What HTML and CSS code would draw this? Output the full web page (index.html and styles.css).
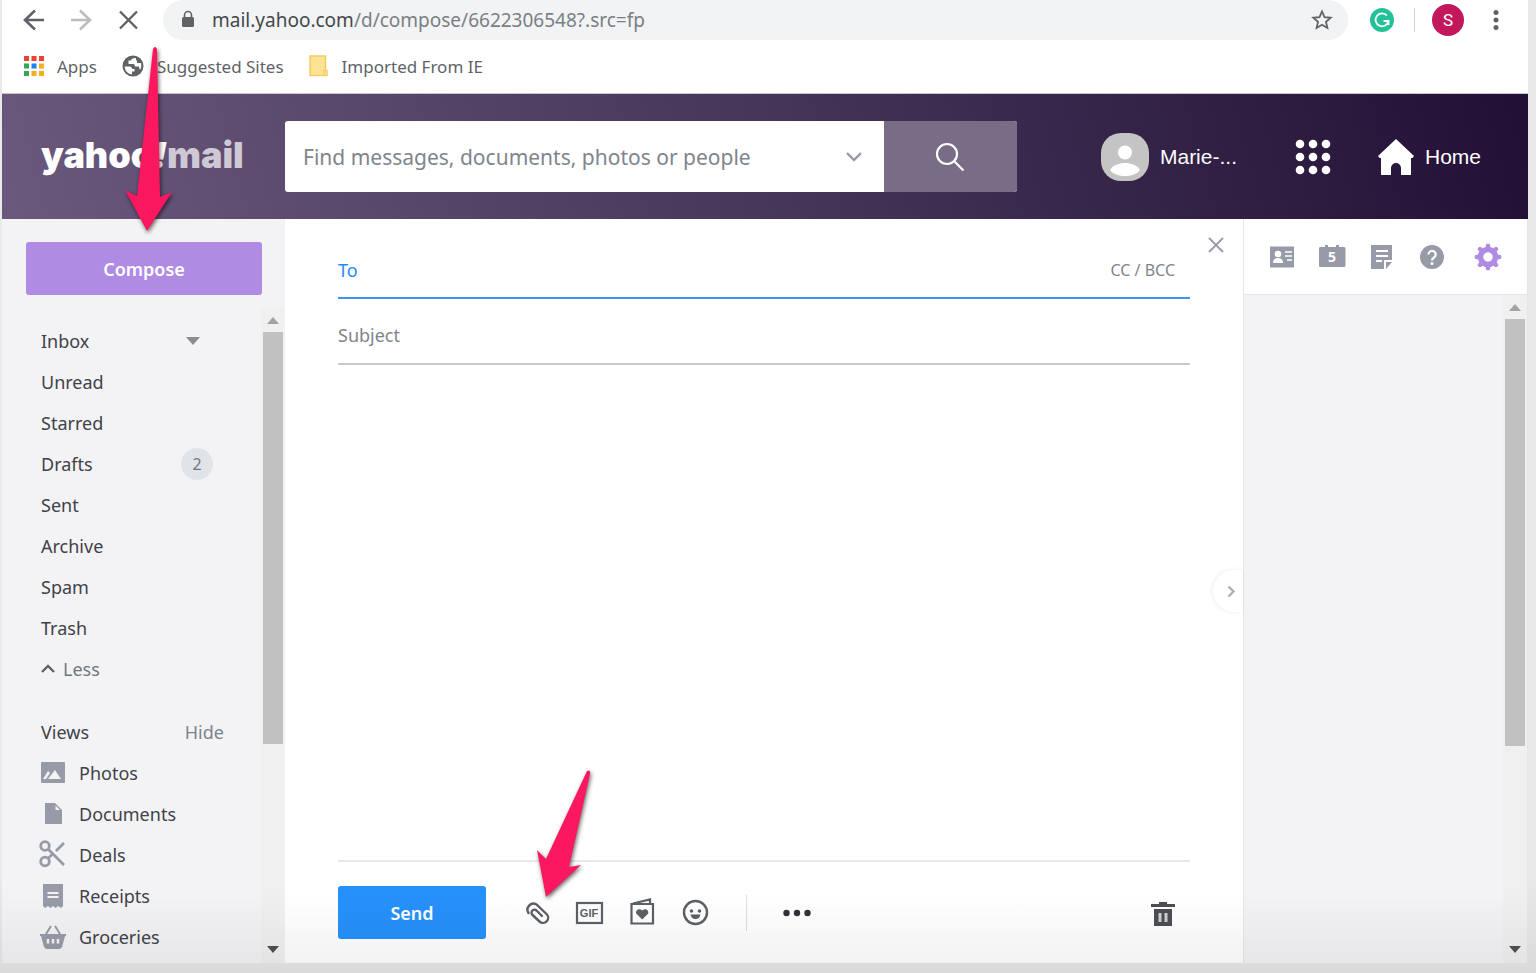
FILE: index.html
```html
<!DOCTYPE html>
<html lang="en">
  <head>
    <meta charset="UTF-8">
    <title>Yahoo Mail - Compose</title>
    <link rel="stylesheet" href="styles.css">
  </head>
  <body>
    <div class="window">
      <!-- browser toolbar -->
      <div class="toolbar">
        <button class="nav-btn" aria-label="Back">
          <svg width="24" height="24" viewBox="0 0 24 24" fill="none" stroke="#5f6368" stroke-width="2.600"><path d="M22 12H3M13 2.500L3 12l10 9.500"/></svg>
        </button>
        <button class="nav-btn" aria-label="Forward">
          <svg width="24" height="24" viewBox="0 0 24 24" fill="none" stroke="#bdbdbd" stroke-width="2.600"><path d="M2 12h19M11 2.500L21 12l-10 9.500"/></svg>
        </button>
        <button class="nav-btn" aria-label="Stop">
          <svg width="24" height="24" viewBox="0 0 24 24" fill="none" stroke="#5f6368" stroke-width="2.400"><path d="M4 3.500l17 17M21 3.500l-17 17"/></svg>
        </button>
        <div class="address">
          <svg width="14" height="18" viewBox="0 0 14 18"><rect x="1" y="6" width="12" height="10" rx="1.500" fill="#5f6368"/><path d="M3.500 7V4a3.500 3.500 0 0 1 7 0v3" fill="none" stroke="#5f6368" stroke-width="1.600"/></svg>
          <span class="url"><b>mail.yahoo.com</b>/d/compose/6622306548?.src=fp</span>
          <button class="star" aria-label="Bookmark this page">
            <svg width="22" height="22" viewBox="0 0 22 22" fill="none" stroke="#5f6368" stroke-width="1.800"><path d="M11 2.500l2.500 5.700 6.200.6-4.700 4.100 1.400 6.100-5.400-3.200-5.400 3.200L7 12.900 2.300 8.800l6.200-.6z"/></svg>
          </button>
        </div>
        <button class="grammarly" aria-label="Grammarly">
          <svg width="24" height="24" viewBox="0 0 24 24"><circle cx="12" cy="12" r="12" fill="#23c197"/><path d="M17 7.500A6.500 6.500 0 1 0 18.500 13H13.500M18.500 13v4" fill="none" stroke="#fff" stroke-width="1.800"/></svg>
        </button>
        <button class="profile">S</button>
        <button class="more" aria-label="Menu">
          <svg width="6" height="22" viewBox="0 0 6 22" fill="#5f6368"><circle cx="3" cy="3.500" r="2.500"/><circle cx="3" cy="11" r="2.500"/><circle cx="3" cy="18.500" r="2.500"/></svg>
        </button>
      </div>
      <div class="bookmarks">
        <a href="#">
          <svg width="20" height="20" viewBox="0 0 20 20"><path d="M0 0h5v5H0zM7.500 0h5v5h-5zM15 0h5v5h-5z" fill="#ea4335"/><path d="M0 7.500h5v5H0zM0 15h5v5H0z" fill="#34a853"/><path d="M7.500 7.500h5v5h-5z" fill="#1a84f0"/><path d="M15 7.500h5v5h-5zM7.500 15h5v5h-5zM15 15h5v5h-5z" fill="#fbab1d"/></svg>
          Apps
        </a>
        <a href="#">
          <svg width="22" height="22" viewBox="0 0 22 22"><circle cx="11" cy="11" r="10.500" fill="#5f6368"/><path d="M2.500 11.500h5q2.500 0 2.500 2.500h2.500v2.500h-2.500v3q-6.500-1-7.500-8zM14 3q-5 0-5 2.500H6.500V9h5q1.500 0 1.500 2.500h4q0 2.500 1.500 3 1.500-3 .500-6.500h-4V5.500H14z" fill="#fff"/></svg>
          Suggested Sites
        </a>
        <a href="#">
          <svg width="20" height="22" viewBox="0 0 20 22"><path d="M1 1h15.500v14.500h1.500v5H1z" fill="#ffe394" stroke="#f3cd63" stroke-width="1.500"/><path d="M15 20v-5" stroke="#f3cd63" stroke-width="1.500"/></svg>
          Imported From IE
        </a>
      </div>

      <!-- mail header -->
      <header class="header">
        <a href="#" class="logo">yahoo<i>!</i><span>mail</span></a>
        <form class="search">
          <input type="text" aria-label="Search" placeholder="Find messages, documents, photos or people">
          <button type="button" class="search-options" aria-label="Search options">
            <svg width="16" height="10" viewBox="0 0 16 10" fill="none" stroke="#979ba7" stroke-width="2.400"><path d="M1 1l7 7 7-7"/></svg>
          </button>
          <button type="button" class="search-btn" aria-label="Search">
            <svg width="30" height="30" viewBox="0 0 30 30" fill="none" stroke="#fff" stroke-width="2.200"><circle cx="12" cy="12" r="10"/><path d="M19 19l9.500 9.500"/></svg>
          </button>
        </form>
        <a href="#" class="account">
          <svg width="48" height="48" viewBox="0 0 48 48"><rect width="48" height="48" rx="20" fill="#c4c4c4"/><circle cx="24" cy="19.500" r="7" fill="#fff"/><path d="M9 37c3-5 9-7 15-7s12 2 15 7c-3 4-9 6-15 6s-12-2-15-6z" fill="#fff"/></svg>
          Marie-...
        </a>
        <button class="apps" aria-label="Apps">
          <svg width="36" height="36" viewBox="0 0 36 36" fill="#fff"><circle cx="5" cy="5" r="4.300"/><circle cx="18" cy="5" r="4.300"/><circle cx="31" cy="5" r="4.300"/><circle cx="5" cy="18" r="4.300"/><circle cx="18" cy="18" r="4.300"/><circle cx="31" cy="18" r="4.300"/><circle cx="5" cy="31" r="4.300"/><circle cx="18" cy="31" r="4.300"/><circle cx="31" cy="31" r="4.300"/></svg>
        </button>
        <a href="#" class="home">
          <svg width="36" height="36" viewBox="0 0 36 36" fill="#fff"><path d="M18 0l18 17-1.500 2H33v17H23v-7a5 5 0 0 0-10 0v7H3V19H1.500L0 17z"/></svg>
          Home
        </a>
      </header>

      <div class="content">
        <aside class="sidebar">
          <button class="compose">
            Compose
            <svg class="arrow arrow-compose" width="54" height="194" viewBox="0 0 54 194"><path d="M31 10q2-4 4 0l3 148 12-5-25 39L3 151l12 6z" fill="#fb185f"/></svg>
          </button>
          <div class="folders-wrap">
            <nav class="folders">
              <ul>
                <li><a href="#">Inbox</a>
                  <svg class="caret" width="14" height="8" viewBox="0 0 14 8"><path d="M0 0h14L7 8z" fill="#8a8c92"/></svg></li>
                <li><a href="#">Unread</a></li>
                <li><a href="#">Starred</a></li>
                <li><a href="#">Drafts</a><span class="count">2</span></li>
                <li><a href="#">Sent</a></li>
                <li><a href="#">Archive</a></li>
                <li><a href="#">Spam</a></li>
                <li><a href="#">Trash</a></li>
                <li><button class="less"><svg width="14" height="9" viewBox="0 0 14 9" fill="none" stroke="#5b636a" stroke-width="2.400"><path d="M1 8l6-6 6 6"/></svg>Less</button></li>
              </ul>
              <div class="views-head"><span>Views</span><button>Hide</button></div>
              <ul class="views">
                <li><a href="#"><svg width="26" height="26" viewBox="0 0 26 26"><path d="M2 2h22a1 1 0 0 1 1 1v19a1 1 0 0 1-1 1H2a1 1 0 0 1-1-1V3a1 1 0 0 1 1-1z" fill="#979ba7"/><path d="M3 19l5-8 2 2-4 6zM8 19l7-9 6 9z" fill="#f3f3f5"/></svg>Photos</a></li>
                <li><a href="#"><svg width="26" height="26" viewBox="0 0 26 26"><path d="M5 2h10l7 7v14H5z" fill="#979ba7"/><path d="M15.500 4.500V9H20z" fill="#f3f3f5"/></svg>Documents</a></li>
                <li><a href="#"><svg width="26" height="26" viewBox="0 0 26 26" fill="none" stroke="#979ba7" stroke-width="2.800"><circle cx="5" cy="4" r="4.300"/><circle cx="5" cy="19.500" r="4.300"/><path d="M8 7l16 16M8 16.500l5-5M16 9l8-8"/></svg>Deals</a></li>
                <li><a href="#"><svg width="26" height="26" viewBox="0 0 26 26"><path d="M3 1h20v22l-2 2-3-2-2.500 2-2.500-2-2.500 2L8 23l-3 2-2-2z" fill="#979ba7"/><path d="M7.500 10h11M7.500 14h11" stroke="#f3f3f5" stroke-width="2"/></svg>Receipts</a></li>
                <li><a href="#"><svg width="26" height="26" viewBox="0 0 26 26"><path d="M0 10h26v2h-1l-3 11q-1 2-3 2H7q-2 0-3-2L1 12H0z" fill="#979ba7"/><path d="M6 10l5-8M20 10l-5-8" stroke="#979ba7" stroke-width="2"/><path d="M8 15v4.500M13 15v4.500M18 15v4.500" stroke="#f3f3f5" stroke-width="2.500"/></svg>Groceries</a></li>
              </ul>
            </nav>
            <div class="scrollbar">
              <svg width="12" height="7" viewBox="0 0 12 7"><path d="M0 7h12L6 0z" fill="#a3a3a3"/></svg>
              <div class="track"><div class="thumb"></div></div>
              <svg width="12" height="7" viewBox="0 0 12 7"><path d="M0 0h12L6 7z" fill="#505050"/></svg>
            </div>
          </div>
        </aside>

        <main class="composer">
          <button class="close" aria-label="Close">
            <svg width="16" height="16" viewBox="0 0 16 16" fill="none" stroke="#979ba7" stroke-width="1.800"><path d="M1 1l14 14M15 1L1 15"/></svg>
          </button>
          <div class="field field-to">
            <label for="to">To</label>
            <input type="text" id="to">
            <button class="cc">CC / BCC</button>
          </div>
          <div class="field">
            <input type="text" id="subject" aria-label="Subject" placeholder="Subject">
          </div>
          <textarea aria-label="Message body"></textarea>
          <div class="actions">
            <button class="send">Send</button>
            <button class="tool" aria-label="Attach files">
              <svg width="28" height="28" viewBox="0 0 28 28" fill="none" stroke="#5b5f66" stroke-width="2.400" stroke-linecap="round"><path d="M5.500 14A6 6 0 0 1 13.500 5.500l10 9.500a5 5 0 0 1-7 7.500l-7-6.500a3 3 0 0 1 4-4.500l5.500 5.500"/></svg>
              <svg class="arrow arrow-attach" width="54" height="136" viewBox="0 0 54 136"><path d="M52 4q4-2 3 3L34 100l12-2-35 32L2 83l9 9z" fill="#fb185f"/></svg>
            </button>
            <button class="tool" aria-label="Insert GIF">
              <svg width="28" height="28" viewBox="0 0 28 28"><rect x="1" y="4" width="25" height="20" fill="none" stroke="#5b5f66" stroke-width="2.200"/><text x="13" y="18" text-anchor="middle" class="gif">GIF</text></svg>
            </button>
            <button class="tool" aria-label="Stationery">
              <svg width="28" height="28" viewBox="0 0 28 28"><path d="M2.500 5h21.500v19.500H2.500zM4 4.500L21 .5v4" fill="none" stroke="#5b5f66" stroke-width="2.200"/><path d="M13.200 20.500l-6-6c-1-3 3-6 6-3 3-3 7 0 6 3z" fill="#5b5f66"/></svg>
            </button>
            <button class="tool" aria-label="Insert emoticon">
              <svg width="28" height="28" viewBox="0 0 28 28"><circle cx="13.500" cy="13.500" r="11.500" fill="none" stroke="#5b5f66" stroke-width="2.400"/><circle cx="9.500" cy="12" r="1.800" fill="#5b5f66"/><circle cx="17.500" cy="12" r="1.800" fill="#5b5f66"/><path d="M8.500 15.500h10q-1 4.500-5 4.500t-5-4.500z" fill="#5b5f66"/></svg>
            </button>
            <span class="divider"></span>
            <button class="tool" aria-label="More options">
              <svg width="28" height="8" viewBox="0 0 28 8" fill="#303236"><circle cx="3.500" cy="4" r="3.200"/><circle cx="14" cy="4" r="3.200"/><circle cx="24.500" cy="4" r="3.200"/></svg>
            </button>
            <button class="tool trash" aria-label="Delete draft">
              <svg width="24" height="26" viewBox="0 0 24 26"><path d="M0 4h8V2h8v2h8v3H0zM3 9h18v17H3z" fill="#4c4e53"/><path d="M9 13v9M15 13v9" stroke="#d0d0d2" stroke-width="3"/></svg>
            </button>
          </div>
          <button class="expand" aria-label="Show panel">
            <svg width="9" height="13" viewBox="0 0 9 13" fill="none" stroke="#b0b0b0" stroke-width="2.400"><path d="M1.500 1.500l5 5-5 5"/></svg>
          </button>
        </main>

        <aside class="right-rail">
          <div class="rail-icons">
            <button aria-label="Contacts">
              <svg width="26" height="26" viewBox="0 0 26 26"><path d="M1 2.500h24v21H1z" fill="#979ba7"/><circle cx="9" cy="10" r="3.300" fill="#fff"/><path d="M4 19q0-5 5-5t5 5z" fill="#fff"/><path d="M16 8h7M16 12h7M18 16h5" stroke="#fff" stroke-width="1.700"/></svg>
            </button>
            <button aria-label="Calendar">
              <svg width="26" height="26" viewBox="0 0 26 26"><path d="M1 3h5V1h3v2h8V1h3v2h5q1.500 0 1.500 1.500v17q0 1.500-1.500 1.500H1q-1 0-1-1.500v-17Q0 3 1 3z" fill="#979ba7"/><text x="13" y="18" text-anchor="middle" class="day">5</text></svg>
            </button>
            <button aria-label="Notepad">
              <svg width="26" height="26" viewBox="0 0 26 26"><path d="M2 1h21v15h-8v9H2z" fill="#979ba7"/><path d="M17 18h6l-6 7z" fill="#979ba7"/><path d="M7 7h12M7 12h12M7 17h6" stroke="#fff" stroke-width="2"/></svg>
            </button>
            <button aria-label="Help">
              <svg width="26" height="26" viewBox="0 0 26 26"><circle cx="13" cy="13" r="12" fill="#979ba7"/><path d="M9.500 10.500a3.600 3.600 0 1 1 5.500 3q-2 1.300-2 3" fill="none" stroke="#fff" stroke-width="2.200"/><circle cx="13" cy="19.500" r="1.500" fill="#fff"/></svg>
            </button>
            <button class="settings" aria-label="Settings">
              <svg width="28" height="28" viewBox="0 0 28 28"><circle cx="14" cy="14" r="7.500" fill="none" stroke="#b08be3" stroke-width="5.500"/><path d="M14 2.800V6M14 22v3.200M2.800 14H6M22 14h3.200M6.100 6.100l2 2M19.900 19.900l2 2M6.100 21.900l2-2M19.900 8.100l2-2" stroke="#b08be3" stroke-width="4.500" stroke-linecap="round"/></svg>
            </button>
          </div>
          <div class="rail-body">
            <div class="scrollbar">
              <svg width="12" height="7" viewBox="0 0 12 7"><path d="M0 7h12L6 0z" fill="#a3a3a3"/></svg>
              <div class="track"><div class="thumb"></div></div>
              <svg width="12" height="7" viewBox="0 0 12 7"><path d="M0 0h12L6 7z" fill="#505050"/></svg>
            </div>
          </div>
        </aside>
      </div>
    </div>
  </body>
</html>
```

FILE: styles.css
```css
* {
  box-sizing: border-box;
}
body {
  margin: 0;
  font-family: "Noto Sans", "Open Sans", sans-serif;
  font-size: 18px;
  color: #3f4248;
  background: linear-gradient(to bottom, #e9e9e9 90%, #dadada);
  min-height: 100vh;
  display: flex;
  padding: 0 8px 10px 2px;
}
button,
input,
textarea {
  font: inherit;
  color: inherit;
  background: none;
  border: 0;
  padding: 0;
  outline: none;
}
button {
  display: flex;
  align-items: center;
  justify-content: center;
}
a {
  color: inherit;
  text-decoration: none;
}
ul {
  list-style: none;
  margin: 0;
  padding: 0;
}
svg {
  display: block;
  flex: none;
  overflow: visible;
}
.window {
  flex: 1;
  position: relative;
  display: flex;
  flex-direction: column;
  background: #fff;
}
/* soft shade along the bottom edge of the window */
.window::after {
  content: "";
  position: absolute;
  left: 0;
  right: 0;
  bottom: 0;
  height: 72px;
  background: linear-gradient(to bottom, transparent, rgba(0, 0, 0, 0.05));
  pointer-events: none;
}

/* browser */
.toolbar {
  display: flex;
  align-items: center;
  height: 40px;
  padding: 0 29px 0 20px;
}
.nav-btn {
  margin-right: 23px;
}
.address {
  flex: 1;
  display: flex;
  align-items: center;
  height: 40px;
  margin-right: 22px;
  padding: 0 15px 0 18px;
  border-radius: 20px;
  background: #f1f3f4;
}
.url {
  flex: 1;
  margin-left: 17px;
  font-size: 19px;
  color: #7b7f84;
}
.url b {
  font-weight: normal;
  color: #45484c;
}
.profile {
  position: relative;
  width: 32px;
  height: 32px;
  margin: 0 29px 0 38px;
  border-radius: 50%;
  background: #c2185b;
  color: #fff;
  font-family: Roboto, sans-serif;
  font-size: 17px;
}
.profile::before {
  content: "";
  position: absolute;
  left: -18px;
  top: 4px;
  width: 1px;
  height: 24px;
  background: #d0d0d0;
}
.bookmarks {
  display: flex;
  height: 54px;
  padding: 0 0 1px 22px;
  border-bottom: 1px solid #c9c6ce;
  font-size: 17px;
  color: #5f6368;
}
.bookmarks a {
  display: flex;
  align-items: center;
  gap: 13px;
  margin-right: 25px;
}

/* mail header */
.header {
  display: flex;
  align-items: center;
  height: 125px;
  padding: 0 47px 0 39px;
  background: linear-gradient(75deg, #6a597d, #46365a 50%, #220f35);
  color: #fff;
  font-family: "Liberation Sans", Arial, sans-serif;
  font-size: 21px;
}
.logo {
  width: 244px;
  padding-bottom: 3px;
  font-family: Inter, sans-serif;
  font-weight: 900;
  font-size: 36px;
}
.logo span {
  color: #cfc9d6;
}
.search {
  flex: 1;
  display: flex;
  height: 71px;
  border-radius: 3px;
  overflow: hidden;
  background: #fff;
}
.search input {
  flex: 1;
  min-width: 0;
  padding-left: 18px;
  font-family: "Noto Sans", "Open Sans", sans-serif;
  font-size: 21px;
  color: #3f4248;
}
.search input::placeholder,
.field input::placeholder {
  color: #7f858d;
  opacity: 1;
}
.search-options {
  width: 60px;
}
.search-btn {
  width: 133px;
  background: #796c86;
}
.account,
.home {
  display: flex;
  align-items: center;
  gap: 11px;
}
.account {
  margin-left: 84px;
}
.apps {
  margin: 0 47px 0 58px;
}

.content {
  flex: 1;
  display: flex;
}

/* folders */
.sidebar {
  flex: none;
  width: 283px;
  display: flex;
  flex-direction: column;
  background: #f3f3f5;
}
.compose {
  position: relative;
  height: 53px;
  margin: 23px 23px 12px 24px;
  border-radius: 3px;
  background: #b08be3;
  color: #fff;
  font-weight: 600;
}
.arrow {
  position: absolute;
  z-index: 2;
  filter: drop-shadow(1px 2px 2px rgba(0, 0, 0, 0.6));
  pointer-events: none;
}
.arrow-compose {
  left: 96px;
  bottom: 62px;
}
.folders-wrap {
  flex: 1;
  display: flex;
}
.folders {
  flex: 1;
  padding: 13px 37px 0 39px;
}
.folders li {
  display: flex;
  align-items: center;
  justify-content: space-between;
  height: 41px;
}
.caret {
  margin-right: 24px;
}
.count {
  width: 32px;
  height: 32px;
  margin-right: 11px;
  border-radius: 50%;
  background: #e0e4e9;
  color: #6e7780;
  font-size: 16px;
  line-height: 32px;
  text-align: center;
}
.less {
  gap: 8px;
  color: #6e7780;
}
.views-head {
  display: flex;
  align-items: center;
  justify-content: space-between;
  height: 41px;
  margin-top: 22px;
}
.views-head button {
  color: #7c838b;
}
.folders .views a {
  display: flex;
  align-items: center;
  gap: 13px;
  margin-left: -1px;
}
.scrollbar {
  width: 24px;
  display: flex;
  flex-direction: column;
  align-items: center;
  padding: 10px 0;
  background: #f0f0f0;
}
.track {
  flex: 1;
  width: 20px;
  margin: 8px 0;
}
.thumb {
  height: 68%;
  background: #c1c1c1;
}

/* compose pane */
.composer {
  flex: 1;
  position: relative;
  display: flex;
  flex-direction: column;
  padding: 24px 53px 24px;
}
.close {
  position: absolute;
  top: 18px;
  right: 19px;
}
.field {
  display: flex;
  align-items: center;
  height: 66px;
  padding-top: 8px;
  border-bottom: 2px solid #c7c8cc;
  color: #7f858d;
}
.field-to {
  height: 56px;
  padding-top: 0;
  border-color: #3b93f3;
}
.field label {
  color: #1f8bf9;
}
.field input {
  flex: 1;
  min-width: 0;
}
.cc {
  margin-right: 15px;
  font-size: 16px;
}
.composer textarea {
  flex: 1;
  resize: none;
}
.actions {
  display: flex;
  align-items: center;
  padding-top: 24px;
  border-top: 2px solid #e6e8ed;
}
.send {
  width: 148px;
  height: 53px;
  margin-right: 37px;
  border-radius: 3px;
  background: #2690fb;
  color: #fff;
  font-weight: 600;
}
.tool {
  position: relative;
  margin-right: 25px;
}
.arrow-attach {
  left: 12px;
  bottom: 24px;
}
.gif {
  font: bold 11px "Liberation Sans", Arial, sans-serif;
  fill: #5b5f66;
}
.divider {
  width: 1px;
  height: 36px;
  margin: 0 36px 0 11px;
  background: #dcdee6;
}
.trash {
  margin: 0 15px 0 auto;
}
.expand {
  position: absolute;
  right: 0;
  top: 50%;
  width: 30px;
  height: 42px;
  margin-top: -21px;
  padding-left: 6px;
  border-radius: 21px 0 0 21px;
  box-shadow: -1px 0 4px rgba(0, 0, 0, 0.08);
  background: #fff;
}

/* right rail */
.right-rail {
  flex: none;
  width: 285px;
  display: flex;
  flex-direction: column;
  border-left: 1px solid #e3e6ee;
  border-right: 1px solid #e6e6e8;
  background: #f3f3f5;
}
.rail-icons {
  display: flex;
  align-items: center;
  gap: 24px;
  height: 76px;
  padding-left: 25px;
  border-bottom: 1px solid #e3e6ee;
  background: #fff;
}
.settings {
  margin-left: 5px;
}
.day {
  font: bold 14px "Noto Sans", sans-serif;
  fill: #fff;
}
.rail-body {
  flex: 1;
  display: flex;
  justify-content: flex-end;
}
.rail-body .scrollbar {
  padding-top: 9px;
}
.rail-body .thumb {
  height: 69%;
}
```
